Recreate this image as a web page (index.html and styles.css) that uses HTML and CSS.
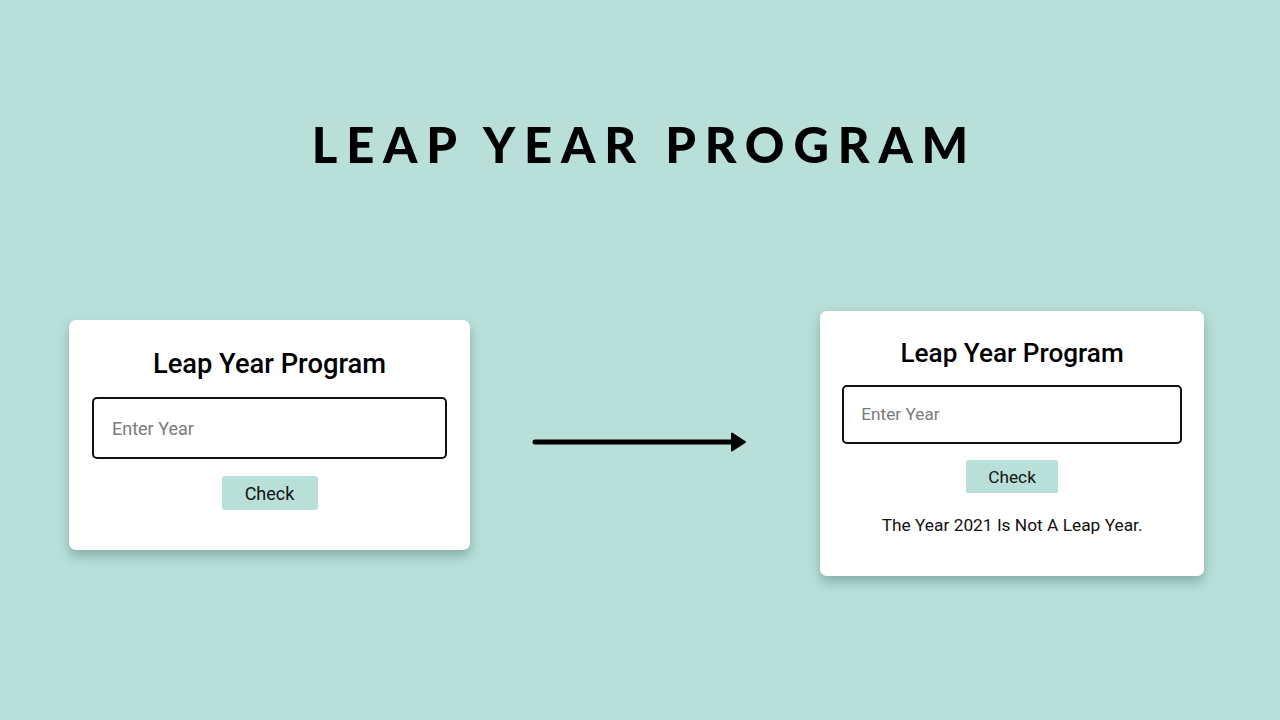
FILE: index.html
```html
<!DOCTYPE html>
<html lang="en">
<head>
<meta charset="utf-8">
<title>Leap Year Program</title>
<link rel="stylesheet" href="styles.css">
</head>
<body>
<header class="banner">
  <h1 class="banner-title">LEAP YEAR PROGRAM</h1>
</header>
<main class="showcase">
  <section class="card card-before">
    <h2 class="card-title">Leap Year Program</h2>
    <input class="year-input" type="text" placeholder="Enter Year">
    <button class="check-btn" type="button">Check</button>
  </section>
  <svg class="arrow" width="216" height="24" viewBox="0 0 216 24" aria-hidden="true">
    <line x1="3" y1="12" x2="204" y2="12" stroke="#000" stroke-width="5" stroke-linecap="round"/>
    <path d="M200 3.5 L213 12 L200 20.5 Z" fill="#000" stroke="#000" stroke-width="2" stroke-linejoin="round"/>
  </svg>
  <section class="card card-after">
    <h2 class="card-title">Leap Year Program</h2>
    <input class="year-input" type="text" placeholder="Enter Year">
    <button class="check-btn" type="button">Check</button>
    <p class="result">The Year 2021 Is Not A Leap Year.</p>
  </section>
</main>
</body>
</html>
```

FILE: styles.css
```css
* { box-sizing: border-box; }

html, body {
  margin: 0;
  padding: 0;
}

body {
  width: 1280px;
  height: 720px;
  overflow: hidden;
  background: #b8e0d9;
  font-family: Roboto, "Liberation Sans", Arial, sans-serif;
  color: #111;
}

.banner {
  padding-top: 120px;
  text-align: center;
}

.banner-title {
  margin: 0;
  padding-left: 0.18em;
  font-family: Lato, "DejaVu Sans", sans-serif;
  font-weight: 900;
  font-size: 49px;
  line-height: 1;
  letter-spacing: 0.18em;
  color: #000;
}

.showcase {
  display: flex;
  align-items: flex-start;
  padding-top: 142px;
  padding-left: 69px;
}

.card {
  width: 401px;
  background: #fff;
  border-radius: 7px;
  padding: 26px 23px 40px;
  box-shadow: 0 6px 12px rgba(40, 80, 72, 0.35);
  display: flex;
  flex-direction: column;
  align-items: stretch;
}

.card-before {
  margin-top: 9px;
}

.card-after {
  zoom: 0.958;
  padding-bottom: 41px;
}

.card-title {
  margin: 0 0 15px;
  text-align: center;
  font-size: 27.3px;
  font-weight: 500;
  line-height: 36px;
  color: #000;
}

.year-input {
  display: block;
  width: 100%;
  height: 62px;
  border: 2.2px solid #111;
  border-radius: 5px;
  padding: 0 18px;
  font-family: Roboto, "Liberation Sans", sans-serif;
  font-size: 18px;
  color: #222;
  background: #fff;
  outline: none;
}

.year-input::placeholder {
  color: #7a7a7a;
}

.check-btn {
  align-self: center;
  margin-top: 17px;
  width: 96px;
  height: 34px;
  border: none;
  border-radius: 3px;
  background: #b8e0d9;
  font-family: Roboto, "Liberation Sans", sans-serif;
  font-size: 18px;
  color: #111;
  padding: 0;
}

.arrow {
  display: block;
  margin-top: 119px;
  margin-left: 62px;
  margin-right: 72px;
  flex: none;
}

.result {
  margin: 22px 0 0;
  text-align: center;
  font-size: 18.1px;
  line-height: 24px;
  color: #111;
}
```
